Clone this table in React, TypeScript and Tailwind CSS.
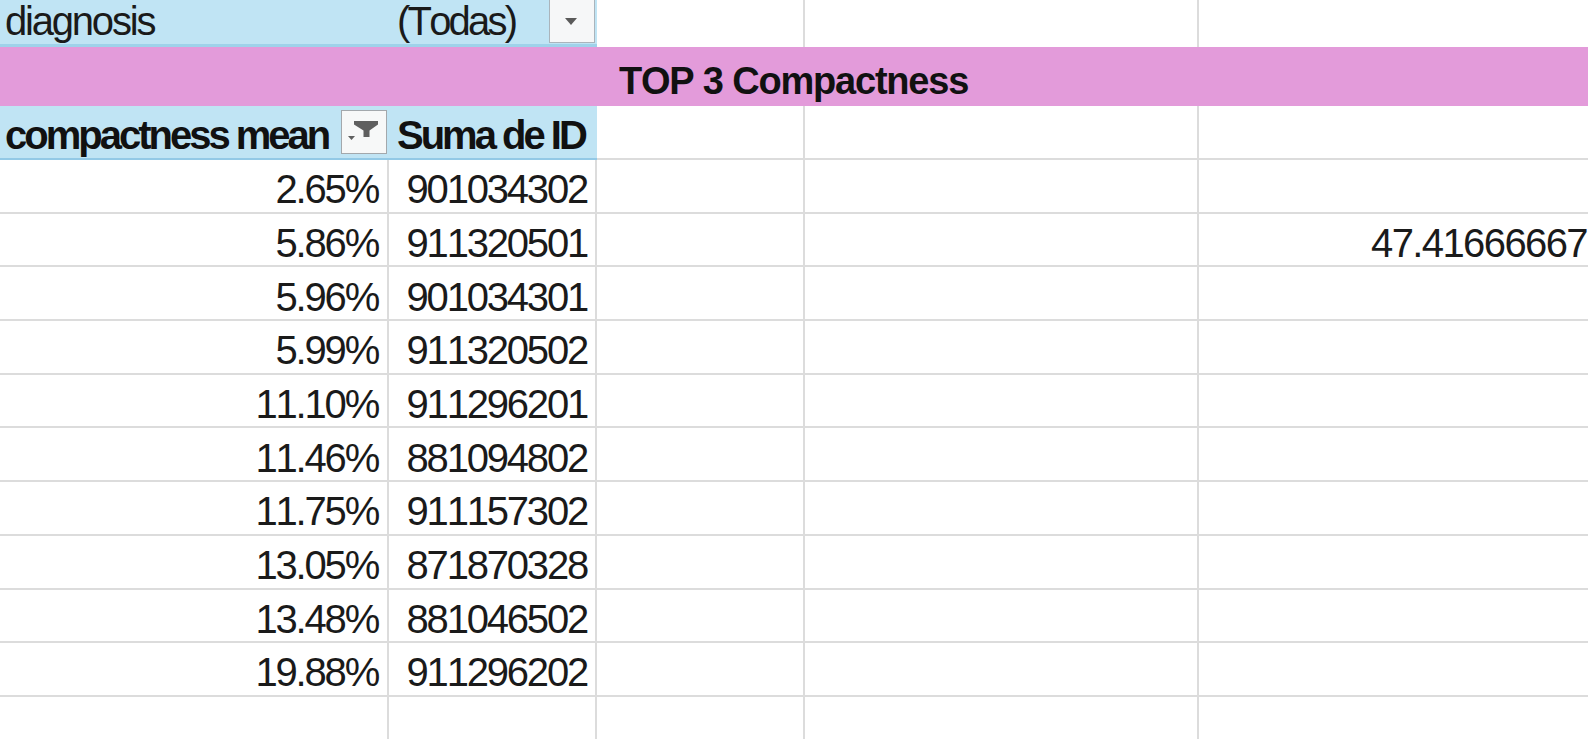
import React from "react";

const data: [string, string, string][] = [
  ["2.65%", "901034302", ""],
  ["5.86%", "911320501", "47.41666667"],
  ["5.96%", "901034301", ""],
  ["5.99%", "911320502", ""],
  ["11.10%", "911296201", ""],
  ["11.46%", "881094802", ""],
  ["11.75%", "911157302", ""],
  ["13.05%", "871870328", ""],
  ["13.48%", "881046502", ""],
  ["19.88%", "911296202", ""],
  ["", "", ""],
];

function DropButton() {
  return (
    <div className="mr-[2px] h-[43px] w-[46px] self-start border-[1.5px] border-t-0 border-[#aab4bb] bg-[#f6f7f8]">
      <svg width="43" height="41" viewBox="0 0 43 41">
        <path d="M15 18 H27 L21 25 Z" fill="#5a5a5a" />
      </svg>
    </div>
  );
}

function FilterButton() {
  return (
    <div className="mr-[2px] h-[44px] w-[46px] border-[1.5px] border-[#a3a8ac] bg-[#f7f8f8]">
      <svg width="43" height="41" viewBox="0 0 43 41">
        <path d="M12 10 H36 V13.5 L27.5 19.5 V26 H21.5 V19.5 L12 13.5 Z" fill="#5f5f5f" />
        <path d="M6 25 H13 L9.5 29 Z" fill="#5f5f5f" />
      </svg>
    </div>
  );
}

export default function App() {
  return (
    <div className="h-[739px] w-[1588px] overflow-hidden bg-white font-['Liberation_Sans',Arial,sans-serif] text-[40px] leading-[40px] tracking-[-2.2px] text-[#1a1a1a] [font-kerning:none]">
      {/* Row 1: report filter */}
      <div className="flex h-[47px] w-[1593px]">
        <div className="flex w-[597px] border-b-[3px] border-[#9fd2ea] bg-[#c0e4f4]">
          <div className="flex w-[389px] items-end pb-[3px] pl-[5px] whitespace-nowrap">diagnosis</div>
          <div className="flex flex-1 items-end justify-between pl-[8px] whitespace-nowrap">
            <span className="pb-[3px] tracking-[-2.8px]">(Todas)</span>
            <DropButton />
          </div>
        </div>
        <div className="w-[208px] border-r-2 border-[#dcdcdc]" />
        <div className="w-[394px] border-r-2 border-[#dcdcdc]" />
        <div className="w-[394px]" />
      </div>

      {/* Row 2: pink title */}
      <div className="flex h-[59px] w-[1593px] bg-[#e39bda]">
        <div className="w-[597px]" />
        <div className="flex items-end pb-[6px] pl-[22px] text-[38px] leading-[38px] font-bold tracking-[-1.2px] whitespace-nowrap text-[#111]">
          TOP 3 Compactness
        </div>
      </div>

      {/* Row 3: pivot header */}
      <div className="flex h-[54px] w-[1593px]">
        <div className="flex w-[597px] border-b-2 border-[#93c9e6] bg-[#c0e4f4] font-bold tracking-[-3px] text-[#111]">
          <div className="flex w-[389px] items-center justify-between pl-[5px] whitespace-nowrap">
            <span className="self-end pb-[3px]">compactness mean</span>
            <FilterButton />
          </div>
          <div className="flex flex-1 items-end pb-[3px] pl-[8px] whitespace-nowrap">Suma de ID</div>
        </div>
        <div className="w-[208px] border-r-2 border-b-2 border-[#dcdcdc]" />
        <div className="w-[394px] border-r-2 border-b-2 border-[#dcdcdc]" />
        <div className="w-[394px] border-b-2 border-[#dcdcdc]" />
      </div>

      {/* Data rows */}
      {data.map(([pct, id, extra], i) => (
        <div key={i} className="flex h-[53.7px] w-[1593px]">
          <div className="flex w-[389px] items-end justify-end border-r-2 border-b-2 border-[#dcdcdc] pr-[9px] pb-[2.5px] whitespace-nowrap">
            {pct}
          </div>
          <div className="flex w-[208px] items-end justify-end border-r-2 border-b-2 border-[#dcdcdc] pr-[8px] pb-[2.5px] whitespace-nowrap">
            {id}
          </div>
          <div className="w-[208px] border-r-2 border-b-2 border-[#dcdcdc]" />
          <div className="w-[394px] border-r-2 border-b-2 border-[#dcdcdc]" />
          <div className="flex w-[394px] items-end justify-end border-b-2 border-[#dcdcdc] pr-[6px] pb-[2.5px] tracking-[-1.6px] whitespace-nowrap">
            {extra}
          </div>
        </div>
      ))}
    </div>
  );
}
